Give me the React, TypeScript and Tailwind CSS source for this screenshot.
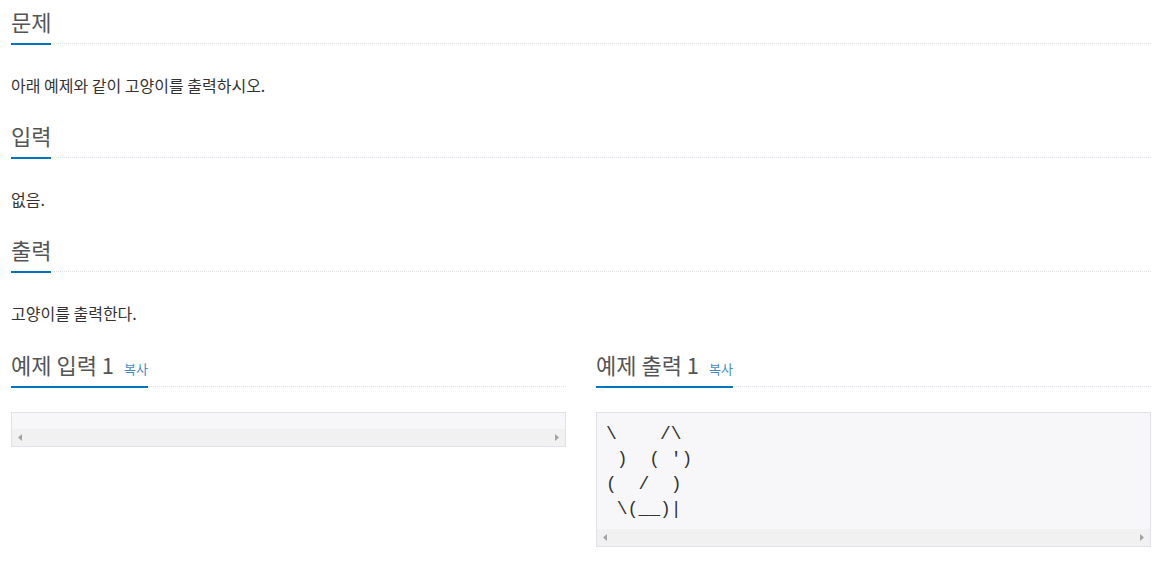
import React from "react";

const FONT = "font-['Noto_Sans_CJK_KR','Open_Sans',sans-serif]";

function Headline({ title, copy }: { title: string; copy?: boolean }) {
  return (
    <div className="border-b border-dotted border-[#dfe3e8]">
      <h2 className="inline-block text-[22px] leading-[22px] pb-[11px] mb-[-2px] border-b-2 border-[#0076c0] text-[#555] font-normal whitespace-nowrap">
        {title}
        {copy && <span className="ml-[10px] text-[13px] leading-none text-[#428bca]">복사</span>}
      </h2>
    </div>
  );
}

function Section({ title, text, last }: { title: string; text: string; last?: boolean }) {
  return (
    <section>
      <Headline title={title} />
      <p className={`mt-[29px] text-[16px] leading-[24px] text-[#333] ${last ? "mb-[28px]" : "mb-[27px]"}`}>{text}</p>
    </section>
  );
}

function Arrow({ dir }: { dir: "left" | "right" }) {
  return (
    <svg width="4" height="7" viewBox="0 0 4 7">
      {dir === "left" ? (
        <path d="M4 0 L0 3.5 L4 7 Z" fill="#a3a3a3" />
      ) : (
        <path d="M0 0 L4 3.5 L0 7 Z" fill="#a3a3a3" />
      )}
    </svg>
  );
}

// fake classic scrollbar track at the bottom of the pre
function ScrollTrack() {
  return (
    <div className="h-[17px] bg-[#f1f1f1] flex items-center justify-between px-[6px]">
      <Arrow dir="left" />
      <Arrow dir="right" />
    </div>
  );
}

function Sample({ title, lines }: { title: string; lines: string[] }) {
  return (
    <div className="flex-1 min-w-0">
      <Headline title={title} copy />
      <div className="mt-[25px] border border-[#e1e1e8] bg-[#f7f7f9]">
        <pre className="pt-[9px] pb-[7px] px-[9px] min-h-[16px] font-['Liberation_Mono',monospace] text-[18px] leading-[25px] text-[#333]">
          {lines.join("\n")}
        </pre>
        <ScrollTrack />
      </div>
    </div>
  );
}

export default function App() {
  return (
    <div className={`${FONT} bg-white min-h-[561px] pt-[10px] pl-[11px]`}>
      <div className="w-[1140px]">
        <Section title="문제" text="아래 예제와 같이 고양이를 출력하시오." />
        <Section title="입력" text="없음." />
        <Section title="출력" text="고양이를 출력한다." last />
        <div className="flex gap-[30px] items-start">
          <Sample title="예제 입력 1" lines={[]} />
          <Sample
            title="예제 출력 1"
            lines={["\\    /\\", " )  ( ')", "(  /  )", " \\(__)|"]}
          />
        </div>
      </div>
    </div>
  );
}
